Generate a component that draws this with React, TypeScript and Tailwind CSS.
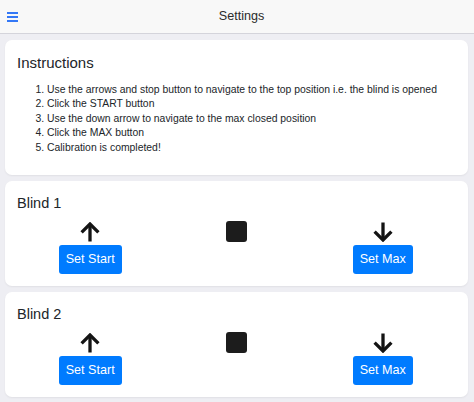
import React from "react";

const STEPS = [
  "Use the arrows and stop button to navigate to the top position i.e. the blind is opened",
  "Click the START button",
  "Use the down arrow to navigate to the max closed position",
  "Click the MAX button",
  "Calibration is completed!",
];

function ArrowIcon({ dir }: { dir: "up" | "down" }) {
  return (
    <svg
      width="20"
      height="20"
      viewBox="0 0 20 20"
      fill="none"
      className={dir === "down" ? "rotate-180" : ""}
    >
      <path d="M10 19.5V3" stroke="#141414" strokeWidth="3.3" />
      <path d="M1.6 10.4L10 2L18.4 10.4" stroke="#141414" strokeWidth="3.3" strokeLinejoin="miter" />
    </svg>
  );
}

function BlindCard({ name }: { name: string }) {
  return (
    <div className="rounded-[7px] bg-white px-[12px] pt-[14px] pb-[12px] shadow-[0_1px_2px_rgba(0,0,0,0.06)]">
      <h5 className="text-[14.5px] leading-[17px] text-[#212529]">{name}</h5>
      <div className="mt-[9px] grid grid-cols-3 items-start">
        <div className="flex flex-col items-center">
          <div className="mt-[1px]">
            <ArrowIcon dir="up" />
          </div>
          <button className="mt-[3px] h-[29px] w-[63px] rounded-[3px] bg-[#007bff] text-[12.6px] text-white">
            Set Start
          </button>
        </div>
        <div className="flex justify-center">
          <button className="h-[21px] w-[21px] rounded-[3px] bg-[#1c1c1c]" aria-label="Stop" />
        </div>
        <div className="flex flex-col items-center">
          <div className="mt-[1px]">
            <ArrowIcon dir="down" />
          </div>
          <button className="mt-[3px] h-[29px] w-[60px] rounded-[3px] bg-[#007bff] text-[12.6px] text-white">
            Set Max
          </button>
        </div>
      </div>
    </div>
  );
}

export default function App() {
  return (
    <div className="min-h-screen bg-[#eeeef3] font-['Liberation_Sans',Arial,sans-serif]">
      <header className="relative flex h-[34px] items-center justify-center border-b border-[#d4d4db] bg-[#f8f8f8]">
        <button className="absolute left-[7px] top-[12px] flex h-[10px] w-[11px] flex-col justify-between">
          <span className="block h-[1.6px] w-full bg-[#3478f6]" />
          <span className="block h-[1.6px] w-full bg-[#3478f6]" />
          <span className="block h-[1.6px] w-full bg-[#3478f6]" />
        </button>
        <h1 className="pl-[9px] text-[12.6px] text-[#2b2b2b]">Settings</h1>
      </header>

      <main className="flex flex-col gap-[6px] pl-[5px] pr-[6px] pt-[6px] pb-[5px]">
        <div className="rounded-[7px] bg-white px-[12px] pt-[14px] pb-[20px] shadow-[0_1px_2px_rgba(0,0,0,0.06)]">
          <h4 className="text-[15px] leading-[18px] text-[#212529]">Instructions</h4>
          <ol className="mt-[10.5px] list-decimal pl-[30px] text-[10.4px] leading-[14.5px] text-[#212529]">
            {STEPS.map((s) => (
              <li key={s}>{s}</li>
            ))}
          </ol>
        </div>

        <BlindCard name="Blind 1" />
        <BlindCard name="Blind 2" />
      </main>
    </div>
  );
}
